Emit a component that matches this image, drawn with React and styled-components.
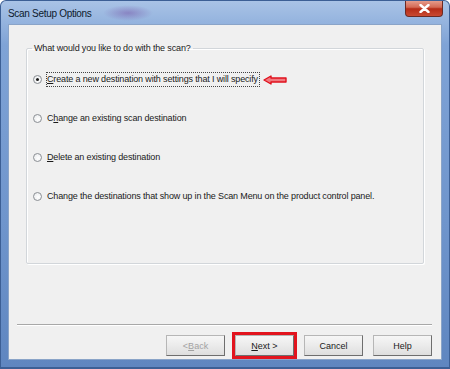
import React from 'react';
import styled, { createGlobalStyle } from 'styled-components';

const GlobalStyle = createGlobalStyle`
  html, body { margin: 0; padding: 0; background: #ffffff; }
  body { font-family: "Liberation Sans", Arial, sans-serif; }
`;

const OPTIONS = [
  { key: 'create', pre: '', accel: 'C', rest: 'reate a new destination with settings that I will specify', checked: true },
  { key: 'change', pre: 'C', accel: 'h', rest: 'ange an existing scan destination' },
  { key: 'delete', pre: '', accel: 'D', rest: 'elete an existing destination' },
  { key: 'menu', pre: '', accel: '', rest: 'Change the destinations that show up in the Scan Menu on the product control panel.' },
];

const App = () => {
  return (
    <>
      <GlobalStyle />
      <Window>
        <TitleBar>
          <Title>Scan Setup Options</Title>
          <Smudge />
          <CloseButton aria-label="Close">
            <svg width="11" height="9" viewBox="0 0 11 9">
              <path d="M1.5 1 L9.5 8 M9.5 1 L1.5 8" stroke="#fff" strokeWidth="2.4" strokeLinecap="round" />
            </svg>
          </CloseButton>
        </TitleBar>
        <Client>
          <GroupBox>
            <Legend>What would you like to do with the scan?</Legend>
            {OPTIONS.map((o) => (
              <OptionRow key={o.key}>
                <Radio checked={o.checked} />
                <OptionLabel focused={o.checked}>
                  {o.pre}
                  {o.accel && <u>{o.accel}</u>}
                  {o.rest}
                </OptionLabel>
                {o.checked && (
                  <Arrow width="24" height="10" viewBox="0 0 24 10">
                    <path
                      d="M1 5 L8 1 L8 3 L23 3 L23 7 L8 7 L8 9 Z"
                      fill="#f07a80"
                      stroke="#e0101c"
                      strokeWidth="1.4"
                      strokeLinejoin="round"
                    />
                  </Arrow>
                )}
              </OptionRow>
            ))}
          </GroupBox>
          <Separator />
          <ButtonRow>
            <Button disabled>
              &lt; <u>B</u>ack
            </Button>
            <Button highlighted>
              <u>N</u>ext &gt;
            </Button>
            <Button>Cancel</Button>
            <Button>Help</Button>
          </ButtonRow>
        </Client>
      </Window>
    </>
  );
};

const Window = styled.div`
  width: 450px;
  height: 369px;
  box-sizing: border-box;
  display: flex;
  flex-direction: column;
  padding: 0 7px 7px 7px;
  background: linear-gradient(180deg, #a9c3e6 0%, #7fa3d6 12%, #6f95cc 60%, #5f86c0 100%);
  border: 1px solid #3c5f95;
  border-bottom-width: 2px;
  border-radius: 6px 6px 0 0;
  position: relative;
  overflow: hidden;
`;

const TitleBar = styled.div`
  height: 23px;
  display: flex;
  align-items: flex-start;
  position: relative;
`;

const Title = styled.div`
  font-size: 10px;
  color: #0c1a2c;
  padding-top: 7px;
  letter-spacing: -0.3px;
  position: relative;
  z-index: 1;
`;

const Smudge = styled.div`
  position: absolute;
  left: 95px;
  top: 4px;
  width: 50px;
  height: 16px;
  border-radius: 50%;
  background: radial-gradient(ellipse at center, rgba(120, 90, 170, 0.55) 0%, rgba(120, 110, 180, 0) 70%);
`;

const CloseButton = styled.div`
  margin-left: auto;
  margin-right: -1px;
  margin-top: -1px;
  width: 38px;
  height: 17px;
  box-sizing: border-box;
  border: 1px solid #6b2a24;
  border-top: none;
  border-radius: 0 0 4px 4px;
  background: linear-gradient(180deg, #e8a393 0%, #d46a55 45%, #b52c17 55%, #c94a32 100%);
  display: flex;
  align-items: center;
  justify-content: center;
`;

const Client = styled.div`
  flex: 1;
  background: #f0f0f0;
  border: 1px solid #8aa4c8;
  display: flex;
  flex-direction: column;
  font-size: 9px;
  color: #1a1a1a;
`;

const GroupBox = styled.fieldset`
  margin: 17px 17px 0 17px;
  padding: 0 0 0 6px;
  min-width: 0;
  height: 222px;
  box-sizing: border-box;
  border: 1px solid #d2d6da;
  box-shadow: inset 1px 1px 0 #ffffff, 1px 1px 0 #ffffff;
  border-radius: 2px;
  display: flex;
  flex-direction: column;
`;

const Legend = styled.legend`
  padding: 0 2px;
  margin-left: -1px;
  font-size: 9px;
  line-height: 12px;
  letter-spacing: -0.15px;
`;

const OptionRow = styled.div`
  display: flex;
  align-items: center;
  height: 15px;
  margin-top: 24px;
  &:first-of-type {
    margin-top: 18px;
  }
`;

const Radio = styled.span`
  width: 9px;
  height: 9px;
  box-sizing: border-box;
  border-radius: 50%;
  border: 1px solid #8b8f94;
  background: radial-gradient(circle at 60% 60%, #ffffff 0%, #e6e8ea 100%);
  margin-right: 4px;
  position: relative;
  flex: none;
  &::after {
    content: '';
    display: ${(props) => (props.checked ? 'block' : 'none')};
    position: absolute;
    left: 2px;
    top: 2px;
    width: 3px;
    height: 3px;
    border-radius: 50%;
    background: #1c1c1c;
  }
`;

const OptionLabel = styled.span`
  line-height: 11px;
  padding: 1px 1px 1px 0;
  border: 1px dotted ${(props) => (props.focused ? '#444' : 'transparent')};
  white-space: nowrap;
  letter-spacing: -0.15px;
`;

const Arrow = styled.svg`
  margin-left: 3px;
  flex: none;
`;

const Separator = styled.div`
  margin: 60px 9px 0 8px;
  height: 1px;
  background: #a8a8a8;
  border-bottom: 1px solid #ffffff;
`;

const ButtonRow = styled.div`
  display: flex;
  justify-content: flex-end;
  gap: 10px;
  padding: 9px 9px 0 0;
`;

const Button = styled.div`
  width: 59px;
  height: 21px;
  box-sizing: border-box;
  display: flex;
  align-items: center;
  justify-content: center;
  font-size: 9px;
  color: ${(props) => (props.disabled ? '#a2a2a2' : '#1a1a1a')};
  background: linear-gradient(180deg, #f6f6f6 0%, #ebebeb 50%, #dedede 100%);
  border: 1px solid #b6b6b6;
  border-right-color: #6e6e6e;
  border-bottom-color: #6e6e6e;
  outline: ${(props) => (props.highlighted ? '3px solid #e2141e' : 'none')};
  outline-offset: 0px;
`;

export default App;
